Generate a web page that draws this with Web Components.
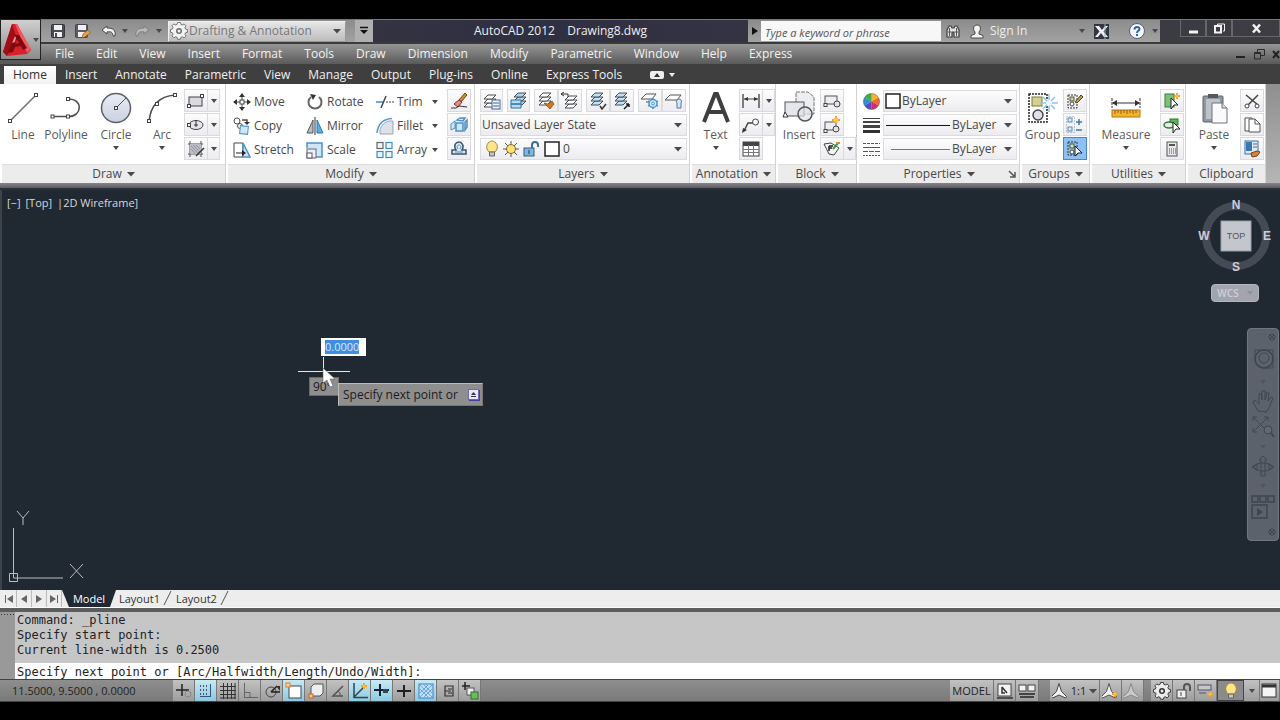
<!DOCTYPE html>
<html lang="en">
<head>
<meta charset="utf-8">
<title>AutoCAD 2012 Drawing8.dwg</title>
<style>
html,body{margin:0;height:100%}
body{background:#000;font-family:"Open Sans","Noto Sans",sans-serif;font-size:12px;line-height:16px;color:#444}
</style>
</head>
<body>
<cad-app></cad-app>
<script>
const D='stroke="#4c4c4c" fill="none"', B='stroke="#4d8fc4" fill="#cfe6f6"';
const node=(x,y)=>`<rect x="${x-1.5}" y="${y-1.5}" width="3" height="3" fill="#fff" stroke="#444"/>`;
const stack=(x,y,c='#fff')=>[8,4,0].map(d=>`<path d="M${x} ${y+d+4}l4-4h8l-4 4z" fill="${c}" stroke="#484c52"/>`).join('');
const gear=(c,s)=>`<path fill="${c}" stroke="${s}" d="M7.5 1h3l.5 2 1.6.7L14.500 2.600l2 2-1.200 1.900.7 1.500 2 .5v3l-2 .5-.7 1.500 1.200 1.900-2 2-1.900-1.200-1.600.7-.5 2h-3l-.5-2-1.600-.7-1.900 1.200-2-2 1.200-1.900L2 12l-2-.5v-3L2 8l.7-1.500L1.500 4.600l2-2 1.900 1.100L7 3z" transform="translate(.5 -.5) scale(.94)"/><circle cx="9" cy="9" r="3" fill="${s}"/><circle cx="9" cy="9" r="1.500" fill="${c}"/>`;
const person='<path d="M7 1.500l2.500 8 5 5-1 1.500-6.500-3-6.500 3-1-1.500 5-5z"';
const star=(x,y,r=3)=>`<path d="M${x} ${y-r-1}v${2*r+2}M${x-r-1} ${y}h${2*r+2}" stroke="#f7a21f" stroke-width="2"/><circle cx="${x}" cy="${y}" r="${r-.5}" fill="#ffc04d"/>`;
const ICONS={
logo:[30,34,'<path d="M10 1h5l14 26-4 4-20 2-4-4z" fill="#d8202c"/><path d="M10 1L1 29l4 4 9-20z" fill="#a10e18"/><path d="M10 1l3 0 12 29 4-4L15 1z" fill="#ee5a5f"/><path d="M13 12L6 30l5-1 2-5 6-1 2 4 4-2-8-13zM15 16l2 4-4 1z" fill="#7c0a10"/><path d="M13 13l-3 7 3-1 1-4z" fill="#f58b8b"/>'],
save:[14,14,'<rect x=".5" y=".5" width="13" height="13" rx="1" fill="#484b52" stroke="#33353a"/><rect x="3" y="1" width="8" height="5" fill="#eef0f4"/><rect x="3" y="8" width="8" height="5" fill="#eef0f4"/><rect x="4" y="9" width="2" height="4" fill="#484b52"/>'],
saveas:[16,15,'<rect x=".5" y=".5" width="12" height="13" rx="1" fill="#5a5d64" stroke="#45474d"/><rect x="3" y="1" width="8" height="5" fill="#eef0f4"/><rect x="3" y="8" width="7" height="5" fill="#eef0f4"/><path d="M7 14l1-4 5-4 2.500 2.500L10 13z" fill="#e9a24a" stroke="#7a4a17" stroke-width=".6"/>'],
undo:[15,12,'<path d="M6 1L1 5l5 4V7c4-1 6 .5 6 4h2c1-6-2-8-8-8z" fill="#f2f2f2" stroke="#4a4a4a"/>'],
redo:[15,12,'<path d="M9 1l5 4-5 4V7c-4-1-6 .5-6 4H1C0 5 3 3 9 3z" fill="#b8b8b8" stroke="#7d7d7d"/>'],
gear:[18,18,gear('#f3f3f3','#6e6e6e')],
binoc:[16,15,'<path d="M2 13V6l2-4h2l1 2h2l1-2h2l2 4v7H9V8H7v5z" fill="#e3e3e3" stroke="#3e3e3e" stroke-width="1.200"/><path d="M3 8h3M10 8h3M4.500 4v8M11.500 4v8" stroke="#555"/>'],
user:[14,15,'<path d="M1 14v-2.500L5 10V8C2 4 4 1 7 1s5 3 2 7v2l4 1.500V14z" fill="#f4f4f4" stroke="#4c4c4c"/>'],
exch:[15,15,'<rect width="15" height="15" fill="#33363f"/><path d="M1 2h4l3 4 3-4h3l-4.500 5.500L14 13h-4L7 9l-3 4H1l4.500-5.500z" fill="#eef1f6"/><path d="M11 0v15" stroke="#9aa" />'],
help:[16,16,'<circle cx="8" cy="8" r="7.500" fill="#f3f6fb" stroke="#5a6270"/><path d="M5.500 6.500C5.500 3 10.800 3.200 10.500 6.200 10.300 7.800 8 8 8 10" stroke="#3560a8" stroke-width="2" fill="none"/><rect x="7" y="11" width="2" height="2" fill="#3560a8"/>'],
min:[11,11,'<path d="M1 9h9" stroke="#f2f2f2" stroke-width="3"/>'],
max:[11,11,'<path d="M3.500 2V1h7v7H9" stroke="#f2f2f2" fill="none"/><rect x="1" y="3" width="6" height="6.500" fill="none" stroke="#f2f2f2" stroke-width="2"/>'],
close:[11,11,'<path d="M2 1.500l7 8M9 1.500l-7 8" stroke="#f2f2f2" stroke-width="2.500"/>'],
dmin:[10,10,'<path d="M0 8h9" stroke="#222" stroke-width="2"/>'],
dmax:[12,11,'<path d="M4.500 3.500v-3h7v6h-4M1.500 3.500h6v6.500h-6zM1 4.500h7" stroke="#2b2b2b" fill="none"/>'],
dclose:[8,9,'<path d="M1 1l6 7M7 1L1 8" stroke="#222" stroke-width="2"/>'],
line:[32,32,`<path d="M3 29L29 3" stroke="#6a6a6a" stroke-width="1.500"/>${node(3,29)}${node(29,3)}`],
pline:[32,32,`<path d="M18 7c15-1 15 18 0 17.500H3" ${D} stroke-width="1.500"/>${node(18,7)}${node(18,24.500)}${node(2.500,24.500)}`],
circle:[32,32,`<defs><linearGradient id="c" x2="0" y2="1"><stop stop-color="#e9edf5"/><stop offset="1" stop-color="#c9d1e0"/></linearGradient></defs><circle cx="16" cy="16" r="14.500" fill="url(#c)" stroke="#5c5f66" stroke-width="1.500"/><path d="M16 16L26 6" stroke="#555"/>${node(16,16)}`],
arc:[32,32,`<path d="M3 30Q5 5 29 3" ${D} stroke-width="1.500"/>${node(3,29)}${node(11,12)}${node(29,3)}`],
rect:[18,16,`<rect x="2" y="4" width="13" height="9" fill="#d9dbe0" stroke="#444"/>${node(2,13)}${node(15,3)}`],
ellipse:[18,16,`<ellipse cx="9" cy="8" rx="7" ry="4.500" fill="#e4e6ea" stroke="#444"/>${node(2,8)}<path d="M7 8h4M9 3v7" stroke="#333"/>`],
hatch:[18,18,`<path d="M3 1v16M14 1v16M1 4h15M1 14h15" stroke="#555"/><path d="M3 4h11v10H3z" fill="#b9bcc4"/><path d="M4 6l7 7M4 9l4 4M6 5l7 7M9 5l4 4" stroke="#999"/><path d="M9 16l8-8" stroke="#333" stroke-width="1.500"/>`],
move:[18,18,'<path d="M9 2v14M2 9h14" stroke="#444"/><path d="M9 0l3 4H6zM9 18l3-4H6zM0 9l4-3v6zM18 9l-4-3v6z" fill="#333"/><rect x="7" y="7" width="4" height="4" fill="#fff" stroke="#444"/>'],
rotate:[18,18,'<path d="M5 4a6.500 6.500 0 1 0 8 0" fill="none" stroke="#666" stroke-width="2"/><path d="M4 1l6 1-3 5z" fill="#333"/>'],
copy:[18,18,`<circle cx="4" cy="4" r="3" ${D}/><path d="M9 3h5v3" ${D} stroke-width="1.500"/><path d="M11 5h6l-3 3z" fill="#333"/><circle cx="7" cy="9" r="2.500" ${D}/><rect x="7" y="9" width="8" height="8" ${B} transform="rotate(6 11 13)"/>`],
mirror:[18,18,'<path d="M7 3v13H1z" fill="#b9bcc2" stroke="#555"/><path d="M11 3v13h6z" fill="#5aaee0" stroke="#2d78ac"/><path d="M9 0v18" stroke="#333"/>'],
stretch:[18,18,`<path d="M1 2h9v14H1z" fill="#fff" stroke="#444"/><path d="M10 2l7 14h-7z" ${B} stroke-width="1.500"/><path d="M3 12h7" stroke="#222"/><path d="M13 12l-4-3v6z" fill="#222"/>`],
scale:[18,18,`<path d="M1 7V2h15v14h-6" ${B} stroke-width="1.500"/><rect x="1" y="8" width="9" height="9" fill="#eef" stroke="#667"/><rect x="1" y="12" width="5" height="5" fill="#fff" stroke="#556"/>`],
trim:[18,18,'<path d="M0 9h7" stroke="#3b8fd0" stroke-width="1.500"/><path d="M5 15L10 3" stroke="#444" stroke-width="1.500"/><path d="M10 9h8" stroke="#444" stroke-dasharray="2 1"/>'],
fillet:[18,18,'<path d="M4 17V13C5 8 9 5 13 4h4v13z" fill="#dde2ea" stroke="#9aa3b0"/><path d="M1 16C2 7 7 2 16 1.500" fill="none" stroke="#4d9ad0" stroke-width="1.500"/>'],
array:[18,18,'<g fill="#eef6fc" stroke="#666" stroke-width="1.200"><rect x="1" y="1.500" width="6" height="6"/><rect x="10" y="1.500" width="6" height="6" stroke="#3f8bc4"/><rect x="1" y="10.500" width="6" height="6" stroke="#3f8bc4"/><rect x="10" y="10.500" width="6" height="6" stroke="#3f8bc4"/></g>'],
erase:[18,18,'<path d="M9 8l6-7 2 2-6 7z" fill="#d8892d" stroke="#6d4515"/><path d="M4 12l5-4 3 2-4 5z" fill="#e58b88" stroke="#7a3330"/><path d="M1 16h5l3-2 8 1" stroke="#333" fill="none"/>'],
explode:[18,18,`<path d="M1 8l4-3v7l-4 2z" ${B}/><rect x="6" y="7" width="7" height="8" ${B} stroke-width="1.500"/><path d="M7 4l3-2h5l-2 3zM15 6l2-2v7l-2 3z" ${B} stroke-width="1.500"/>`],
offset:[18,18,'<path d="M2 14h14v-4h-4c3-5-1-8-3-8-3 0-6 3-3 8H2z" fill="#dcebf8" stroke="#415468" stroke-width="1.500"/><path d="M5 12h8M8 9c-2-3 0-4 1-4s3 1 1 4" stroke="#4d8fc4" fill="none"/>'],
lprop:[20,20,stack(2,4)+'<rect x="10" y="9" width="8" height="9" fill="#eef5fc" stroke="#44678c"/><path d="M11 12h6M11 15h6" stroke="#44678c"/>'],
lstate:[20,20,stack(5,2,'#a9d3f2')+'<path d="M2 9h10v4H2zM2 13h10v4H2z" fill="#b9dcf5" stroke="#2f6ea3"/>'],
lcur:[20,20,stack(3,2)+'<path d="M8 12l4 1 4-3 2 3-4 5z" fill="#d8761f" stroke="#7f4410" stroke-width=".7"/>'],
lprev:[20,20,stack(5,5)+'<path d="M1 3h7v3M1 3l3-2M1 3l3 2" stroke="#333" fill="none"/>'],
liso:[20,20,stack(3,2,'#bfe0f5')+'<path d="M12 15l2 3 4-5" stroke="#333" fill="none" stroke-width="1.500"/>'],
luniso:[20,20,stack(3,2,'#bfe0f5')+'<path d="M12 18l5-5M17 13v3M17 13h-3" stroke="#222" stroke-width="1.500"/>'],
lfreeze:[20,20,'<path d="M1 8l5-5h10l-4 5zM6 11h4" fill="#fff" stroke="#555"/><path d="M13 7v11M8 10l10 5M18 10L8 15" stroke="#4a95cf" stroke-width="1.500"/><circle cx="13" cy="12.500" r="4" fill="#dcedf9" stroke="#4a95cf" stroke-width="1.500"/><circle cx="13" cy="12.500" r="1.500" fill="none" stroke="#4a95cf"/>'],
loff:[20,20,'<path d="M1 9l5-5h11l-4 5z" fill="#fff" stroke="#555"/><path d="M13 12a2.500 2.500 0 1 1 4 0v5h-4z" fill="#d8e7f5" stroke="#5876a0"/>'],
bulb:[14,18,'<path d="M4 12C-1 7 3 1 7 1s8 6 3 11z" fill="#ffe48a" stroke="#a1893d"/><path d="M4.500 12h5v4h-5z" fill="#c5c5c5" stroke="#666"/>'],
sun:[18,18,'<path d="M9 1v16M1 9h16M3 3l12 12M15 3L3 15" stroke="#555"/><circle cx="9" cy="9" r="4.500" fill="#ffe070" stroke="#806a28"/>'],
unlock:[18,18,'<rect x="1" y="8" width="10" height="8" fill="#7db7de" stroke="#2f607f"/><path d="M9 8V5c0-4 6-4 6 0v2" fill="none" stroke="#3c7090" stroke-width="2"/><path d="M6 10v4" stroke="#234"/>'],
swatch:[16,16,'<rect x="1" y="1" width="14" height="14" fill="#fff" stroke="#222" stroke-width="1.500"/>'],
bigA:[32,32,'<path d="M4 30L15 2h2l11 28M8 20h16" fill="none" stroke="#3f3f3f" stroke-width="4"/>'],
dim:[20,18,'<path d="M2 2v14M18 2v14" stroke="#555" stroke-width="1.500"/><path d="M3 7h14" stroke="#444"/><path d="M3 7l4-2v4zM17 7l-4-2v4z" fill="#333"/>'],
leader:[20,18,'<path d="M3 15l4-8h5" stroke="#444" fill="none" stroke-width="1.500"/><path d="M1 17l5-3-4-2z" fill="#333"/><circle cx="14.500" cy="6" r="3" fill="#fff" stroke="#444"/>'],
table:[20,18,'<rect x="2" y="2" width="16" height="14" fill="#fff" stroke="#444"/><path d="M2 4h16" stroke="#444" stroke-width="4"/><path d="M2 9.500h16M2 12.500h16M7.500 5v11M12.500 5v11" stroke="#777"/>'],
insert:[34,34,'<path d="M14 11V1h12l6 5v17H14z" fill="#eceef2" stroke="#777" stroke-dasharray="4 1"/><rect x="3" y="11" width="19" height="14" fill="#e3e6ec" stroke="#555"/><circle cx="23" cy="23" r="7" fill="#dfe2e8aa" stroke="#555" stroke-width="1.500"/><path d="M3 21l3 5H1z" fill="#fff" stroke="#333"/>'],
bcreate:[18,18,`<rect x="2" y="4" width="12" height="8" fill="#eceef2" stroke="#555"/><circle cx="14" cy="12" r="3" fill="#e0e2e6" stroke="#444"/>${node(2.500,13)}`],
bedit:[18,18,`<rect x="2" y="6" width="11" height="8" fill="#eceef2" stroke="#555"/><circle cx="13" cy="13" r="3" fill="#e0e2e6" stroke="#444"/>${node(2.500,15)}${star(13,4)}`],
battr:[18,18,'<path d="M1 4l7-1 8 5-5 7-5-1z" fill="#f3f3f3" stroke="#444"/><path d="M6 6v5M6 6h4M6 8h3" stroke="#222" stroke-width="1.500"/><path d="M10 9l5-6" stroke="#3f9b46" stroke-width="2"/><path d="M13 3h4" stroke="#e0892a" stroke-width="2"/>'],
wheel:[17,17,'<g transform="translate(8.500 8.500)"><circle r="8" fill="#ddd"/><path d="M0 0V-8A8 8 0 0 1 7-4z" fill="#f4b52c"/><path d="M0 0L7-4A8 8 0 0 1 7 4z" fill="#ee6b2d"/><path d="M0 0L7 4A8 8 0 0 1 0 8z" fill="#d32f6d"/><path d="M0 0V8A8 8 0 0 1-7 4z" fill="#5b4bc0"/><path d="M0 0L-7 4A8 8 0 0 1-7-4z" fill="#2f8fd6"/><path d="M0 0L-7-4A8 8 0 0 1 0-8z" fill="#3fae4a"/><circle r="8" fill="none" stroke="#66666688"/></g>'],
weights:[17,17,'<path d="M0 1.500h17" stroke="#444"/><path d="M0 5h17" stroke="#444" stroke-width="2"/><path d="M0 9.500h17" stroke="#444" stroke-width="3"/><path d="M0 14.500h17" stroke="#333" stroke-width="3"/>'],
types:[17,17,'<g stroke="#555"><path d="M0 2.500h17" stroke-dasharray="3 1"/><path d="M0 6.500h17"/><path d="M0 10.500h17" stroke-dasharray="5 1"/><path d="M0 14.500h17" stroke-dasharray="2 1"/></g>'],
wline:[66,3,'<path d="M1 1.500h64" stroke="#111"/>'],
tline:[66,3,'<path d="M6 1.500h59" stroke="#777"/>'],
group:[32,32,`<rect x="2" y="2" width="18" height="28" fill="#fff" stroke="#222" stroke-width="1.500" stroke-dasharray="2 1"/><rect x="5" y="5" width="10" height="9" fill="#d2d28a" stroke="#777a3c"/><circle cx="11" cy="23" r="5" fill="#dfe3e8" stroke="#445"  stroke-width="1.500"/><path d="M22 2v18M13 11h18M16 5l12 12M28 5L16 17" stroke="#8cc6ec" stroke-width="1.500"/><circle cx="22" cy="11" r="3" fill="#eef9ff"/>`],
gedit:[18,18,'<rect x="2" y="3" width="9" height="13" fill="none" stroke="#333" stroke-dasharray="2 1"/><rect x="4" y="5" width="4" height="4" fill="#d2d28a" stroke="#555"/><circle cx="6" cy="12" r="2" fill="#fff" stroke="#444"/><path d="M9 10l6-7 2 2-6 6z" fill="#b8a04a" stroke="#4d431b"/>'],
gadd:[18,18,'<g fill="#dcecf8" stroke="#5c87ab"><rect x="2" y="2" width="4" height="4"/><rect x="2" y="11" width="4" height="4"/></g><rect x="0.500" y=".5" width="8" height="16" fill="none" stroke="#7a94ad" stroke-dasharray="1 2"/><path d="M10 6h6M13 3v6M10 14h6" stroke="#44789f" stroke-width="1.500"/>'],
gsel:[18,18,'<rect x="2" y="2" width="9" height="13" fill="none" stroke="#333" stroke-dasharray="2 1"/><rect x="4" y="4" width="4" height="4" fill="#d8eaa0" stroke="#555"/><circle cx="6" cy="12" r="2" fill="#fff" stroke="#444"/><path d="M9 6l7 7h-4l-3 3z" fill="#f8f8f8" stroke="#222"/>'],
measure:[32,32,'<path d="M2 6v10M30 6v10" stroke="#333" stroke-dasharray="3 1"/><path d="M3 11h26" stroke="#333"/><path d="M2 11l5-3v6zM30 11l-5-3v6z" fill="#333"/><rect x="2" y="18" width="28" height="7" fill="#f5b32c" stroke="#b0761a"/><path d="M5 18v4M8 18v3M11 18v4M14 18v3M17 18v4M20 18v3M23 18v4M26 18v3" stroke="#8a5c12"/>'],
qsel:[20,20,`<rect x="3" y="3" width="9" height="13" fill="#7cc07a" stroke="#3c7a3c"/><path d="M9 7l7 7h-4l-3 4z" fill="#fff" stroke="#222"/>${star(15,5,2)}`],
selall:[20,20,'<rect x="8" y="4" width="8" height="6" fill="#5fb35f" stroke="#2f7a2f"/><ellipse cx="7" cy="10" rx="5" ry="3" fill="#dff0df" stroke="#3c7a3c" stroke-width="1.500"/><path d="M11 7l7 7h-4l-3 4z" fill="#fff" stroke="#222"/>'],
calc:[18,18,'<rect x="4" y="2" width="10" height="14" fill="#e8e8e8" stroke="#555"/><rect x="6" y="4" width="6" height="2" fill="#555"/><path d="M6 9h7M6 11h7M6 13h7" stroke="#555" stroke-dasharray="1 1" />'],
paste:[32,32,'<rect x="5" y="4" width="20" height="26" rx="1" fill="#9298a0" stroke="#5d636b"/><path d="M10 2h10v4H10z" fill="#555a60"/><rect x="8" y="7" width="14" height="20" fill="#bec3ca"/><path d="M14 11h10l5 5v15H14z" fill="#fafafa" stroke="#6b7179"/><path d="M24 11v5h5" fill="#ddd" stroke="#6b7179"/>'],
cut:[18,18,'<path d="M3 3l12 10M15 3L5 13" stroke="#444" stroke-width="1.500"/><circle cx="4" cy="14" r="2" fill="#fff" stroke="#444"/><circle cx="14" cy="14" r="2" fill="#fff" stroke="#444"/>'],
clip:[18,18,'<path d="M2 2h7v13H2z" fill="#fff" stroke="#555"/><path d="M6 3h6l5 5v8H6z" fill="#fff" stroke="#555"/><path d="M12 3v5h5" fill="none" stroke="#555"/>'],
match:[18,18,'<rect x="2" y="1" width="13" height="13" fill="#dfeaf5" stroke="#3a6ea5"/><rect x="3" y="2" width="6" height="9" fill="#3877b8"/><path d="M10 4h4M10 7h4" stroke="#667"/><path d="M8 13l6-2 3 1-3 4-5 1z" fill="#d98138" stroke="#7a4415"/>'],
launch:[8,8,'<path d="M1 1l5 5M7 2v5H2" stroke="#555" stroke-width="1.500" fill="none"/>'],
wheelnav:[22,24,'<path d="M3 3h18v18H12A9 9 0 0 1 3 12z" fill="none" stroke="#3e4650"/><circle cx="12" cy="12" r="9" fill="none" stroke="#3e4650" stroke-width="1.500"/><circle cx="12" cy="11" r="5" fill="none" stroke="#3e4650"/>'],
hand:[22,24,'<path d="M6 22L1 13l2-2 4 4V5l2-1 1 7V2h3v9l2-8 2 1-1 8 3-4 2 1-4 10-3 4z" fill="none" stroke="#3e4650"/>'],
zoomx:[24,24,'<path d="M2 2l15 15M17 2L2 17M2 6V2h4M13 2h4v4M2 13v4h4" stroke="#3e4650" fill="none"/><circle cx="17" cy="15" r="4" fill="#626872" stroke="#3e4650"/><path d="M20 18l3 4" stroke="#3e4650" stroke-width="2"/>'],
orbit:[24,24,'<ellipse cx="12" cy="13" rx="9" ry="4" fill="none" stroke="#3e4650"/><path d="M10 22V6H8l4-4 4 4h-2v16zM1 13l5-3v6zM23 13l-5-3v6z" fill="none" stroke="#3e4650"/>'],
motion:[24,26,'<path d="M1 2h6v6H1zM9 2h6v6H9zM17 2h6v6h-6zM1 11h15v13H1z" fill="none" stroke="#3e4650" stroke-width="1.500"/><path d="M6 14l6 4-6 4z" fill="#3e4650"/>'],
nclose:[8,8,'<circle cx="4" cy="4" r="3" fill="none" stroke="#3e4650"/><path d="M2 2l4 4M6 2L2 6" stroke="#3e4650"/>'],
nfirst:[12,10,'<path d="M2.500 1v8" stroke="#666"/><path d="M10 1v8L4 5z" fill="#666"/>'],
nprev:[12,10,'<path d="M9 1v8L3 5z" fill="#666"/>'],
nnext:[12,10,'<path d="M3 1v8l6-4z" fill="#666"/>'],
nlast:[12,10,'<path d="M9.500 1v8" stroke="#666"/><path d="M2 1v8l6-4z" fill="#666"/>'],
slash:[10,16,'<path d="M1 15L8 1" stroke="#555"/>'],
s1:[18,18,'<path d="M1 8h13M7 2v12" stroke="#222" stroke-width="1.500"/><circle cx="13" cy="12" r="3" fill="none" stroke="#888"/>'],
s2:[18,18,'<g stroke="#456" stroke-dasharray="1 2" stroke-width="2"><path d="M3 4h9M3 8h9M3 12h9"/></g><path d="M13.500 2v13M3 14.500h11" stroke="#357"/>'],
s3:[18,18,'<path d="M1 4.500h16M1 8.500h16M1 12.500h16M1 16h16M4.500 1v16M8.500 1v16M12.500 1v16M16 1v16" stroke="#333"/>'],
s4:[18,18,'<path d="M3.500 1v14.500H17M3 10.500h6v5" stroke="#666" fill="none"/>'],
s5:[18,18,'<circle cx="8" cy="10" r="5" fill="none" stroke="#444"/><path d="M8 10h9M8 10l6-6" stroke="#222" stroke-width="1.500"/><path d="M13 4h4v5z" fill="#333"/>'],
s6:[18,18,'<rect x="4" y="4" width="12" height="12" fill="#fff" stroke="#445"/><rect x="1" y="1" width="4" height="4" fill="#ffd29a" stroke="#d7822a"/>'],
s7:[18,18,'<path d="M4 5l3-3h9v9l-3 3H4z" fill="#eee" stroke="#555"/><rect x="2" y="12" width="4" height="4" fill="#f9c089" stroke="#c66d1e"/>'],
s8:[18,18,'<path d="M14 4L4 14h10" stroke="#555" fill="none" stroke-width="1.500"/><path d="M9 9q3 2 2 5" stroke="#555" fill="none"/>'],
s9:[18,18,`<path d="M3 1v14.500h14M3 15L13 5" stroke="#2c4656" fill="none" stroke-width="1.500"/>${star(13,4,2)}`],
s10:[18,18,'<path d="M1 8h15M7 2v12" stroke="#123" stroke-width="2"/><path d="M10 7h5v4h-5z" fill="#345"/>'],
s11:[18,18,'<path d="M2 9h14" stroke="#222" stroke-width="2"/><path d="M9 3v12" stroke="#222" stroke-width="2"/>'],
s12:[18,18,'<rect x="2" y="2" width="14" height="14" fill="#bfe0fa" stroke="#3b7fc0"/><path d="M3 3l12 12M3 7l8 8M7 3l8 8M15 3L3 15M11 3l-8 8M15 7l-8 8" stroke="#6aa6da"/>'],
s13:[18,18,'<path d="M6 4h8v10H6zM6 9h6M9 7h4M9 11h4" fill="none" stroke="#333" stroke-width="1.200"/>'],
s14:[20,20,'<path d="M2 5h8M5 1v8" stroke="#222" stroke-width="1.500"/><rect x="7" y="7" width="7" height="7" fill="#eee" stroke="#555"/><rect x="11" y="11" width="7" height="7" fill="#6dbb5c" stroke="#2f6e2a"/>'],
m1:[18,18,'<rect x="2" y="2" width="13" height="12" fill="#f3f3f3" stroke="#444"/><path d="M6 5l5 6M6 5v6h3" stroke="#333" fill="none" stroke-width="1.500"/><path d="M1 16h16" stroke="#333" stroke-width="1.500"/>'],
m2:[18,18,'<rect x="1" y="3" width="7" height="6" fill="#f3f3f3" stroke="#444"/><rect x="10" y="3" width="7" height="6" fill="#f3f3f3" stroke="#444"/><path d="M1 12h16M2 15h14" stroke="#444" stroke-width="2"/>'],
a1:[16,18,person+' fill="#f1f1f1" stroke="#444"/>'],
a2:[18,18,person+' fill="#f1f1f1" stroke="#555"/>'+star(13,12,2)],
a3:[18,18,person+' fill="#c9c9c9" stroke="#888"/>'],
gear2:[18,18,gear('#ececec','#333')],
lock:[18,18,'<rect x="2" y="8" width="9" height="8" fill="#efefef" stroke="#444"/><path d="M9 8V5c0-4 6-4 6 0v4" fill="none" stroke="#555" stroke-width="2"/><path d="M6 10v4" stroke="#444"/>'],
hw:[18,18,'<rect x="1" y="3" width="13" height="5" fill="#c5c7cf" stroke="#556"/><path d="M2 11h7" stroke="#556"/>'+star(13,12,2)],
clean:[18,18,'<rect x="1" y="2" width="14" height="13" fill="#f5f5f5" stroke="#333"/><path d="M1 4h14" stroke="#333" stroke-width="3"/>'],
down:[8,6,'<path d="M0 1h8L4 5.500z" fill="#4a4a4a"/>'],
tiny:[6,4,'<path d="M0 0h6L3 4z" fill="#4a4a4a"/>'],
tinylight:[6,4,'<path d="M0 0h6L3 4z" fill="#eee"/>'],
right:[6,8,'<path d="M0 0v8l6-4z" fill="#111"/>'],
more:[10,10,'<path d="M1 1.500h8" stroke="#111" stroke-width="1.500"/><path d="M1 4h8L5 8z" fill="#111"/>'],
pill:[14,8,'<rect width="14" height="8" rx="2" fill="#eee"/><path d="M4 6h6L7 2z" fill="#333"/>'],
cursor:[14,20,'<path d="M1 0v15l4-3 3 7 3-1-3-7h5z" fill="#fff" stroke="#555" stroke-width=".5"/>'],
pick:[12,12,'<rect x=".5" y=".5" width="10" height="10" fill="#e9eaf6" stroke="#6a6ab0"/><path d="M3 6h5L5.500 3z" fill="#334"/><path d="M3 7.500h5" stroke="#334"/><path d="M1 11.500h11M11.500 1v11" stroke="#4242a0" fill="none"/>']
};
const define=(name,css,html)=>{
  const t=document.createElement('template');
  customElements.define(name,class extends HTMLElement{
    connectedCallback(){
      if(this.shadowRoot)return;
      const r=this.attachShadow({mode:'open'});
      t.innerHTML=`<style>:host{box-sizing:border-box}*{box-sizing:border-box}button,select,input{font:inherit;color:inherit;margin:0;padding:0;border:0;background:none;border-radius:0}button{display:flex;align-items:center;justify-content:center;white-space:nowrap}a{color:inherit;text-decoration:none}${css}</style>`+(typeof html==='function'?html(this):html);
      r.append(t.content.cloneNode(true));
    }
  });
};
define('cad-icon',':host{display:block;flex:none}svg{display:block}',e=>{
  const [w,h,s]=ICONS[e.getAttribute('name')];
  return `<svg width="${w}" height="${h}" viewBox="0 0 ${w} ${h}" aria-hidden="true">${s}</svg>`;});
const ic=n=>`<cad-icon name="${n}"></cad-icon>`;

define('icon-button',':host{display:flex;flex:none}button{width:100%;height:100%}',
  e=>`<button aria-label="${e.getAttribute('label')}">${ic(e.getAttribute('icon'))}</button>`);

define('big-tool',`:host{display:block}button{flex-direction:column;justify-content:flex-start;width:100%;height:100%;padding-top:2px}
.i{height:34px;display:flex;align-items:center}.l{margin-top:2px;color:#5a5a5a}cad-icon[name=tiny]{margin-top:3px}`,
  e=>`<button><span class="i">${ic(e.getAttribute('icon'))}</span><span class="l">${e.getAttribute('label')}</span>${e.hasAttribute('menu')?ic('tiny'):''}</button>`);

define('row-tool',`:host{display:flex;height:24px;align-items:center;justify-content:space-between}button{gap:3px;height:22px}.m{width:12px}`,
  e=>`<button>${ic(e.getAttribute('icon'))}${e.getAttribute('label')}</button>${e.hasAttribute('menu')?`<button class="m" aria-label="${e.getAttribute('label')} options">${ic('tiny')}</button>`:''}`);

define('chip-tool',`:host{display:flex;height:23px}button{width:24px;height:23px;background:linear-gradient(#fcfcfc,#ececf1);border:1px solid #d9d9de}
.m{width:12px;border-left:0}:host([on]) button{background:#8fc0f2;border-color:#4d86c4}:host([narrow]) button{width:23px}`,
  e=>`<button aria-label="${e.getAttribute('label')}">${ic(e.getAttribute('icon'))}</button>${e.hasAttribute('menu')?`<button class="m" aria-label="${e.getAttribute('label')} options">${ic('tiny')}</button>`:''}`);

define('drop-list',`:host{display:flex;align-items:center;gap:3px;height:22px;padding:0 4px;background:linear-gradient(#fdfdfd,#ececf0);border:1px solid #dcdce0;min-width:0}
:host([tight]){gap:1px;padding:0 4px 0 1px}
select{appearance:none;flex:1;min-width:0;height:100%;text-align:left;outline:0}:host([plain]){background:linear-gradient(#e6e6e6,#bdbdbd);border-color:#f0f0f0 #999 #999 #f0f0f0;color:#777}`,
  e=>`<slot></slot><select aria-label="${e.getAttribute('label')}"><option>${e.getAttribute('value')}</option></select>${ic('down')}`);

define('ribbon-panel',`:host{display:flex;flex-direction:column;flex:none;background:#fff;border-right:1px solid #d2d2d2}
.body{display:flex;height:80px;padding-top:5px}footer{height:19px;background:#ececec;border-top:1px solid #dedede;display:grid;grid-template-columns:1fr auto 1fr;align-items:center}
button{grid-column:2;gap:5px;height:18px}.x{grid-column:3;justify-self:end;width:14px}`,
  e=>`<div class="body"><slot></slot></div><footer><button>${e.getAttribute('label')}${e.hasAttribute('flat')?'':ic('down')}</button>${e.hasAttribute('launch')?`<button class="x" aria-label="Open palette">${ic('launch')}</button>`:''}</footer>`);

define('title-bar',`:host{display:flex;height:25px;background:linear-gradient(90deg,#3a3a40,#2f2f42 40%,#3d3d42);border-top:1px solid #777;border-bottom:2px solid #3b3b3b;color:#eee}
.q,.r{display:flex;flex:none;align-items:center;background:linear-gradient(#8c8c8c,#a2a2a2)}
.q{width:332px;padding-left:9px}.q icon-button{width:18px;height:22px}.q .n{width:16px}.q .wide{width:34px}.q drop-list{width:178px;height:21px;margin-right:9px}.q .e{background:#b0b0b0}
h1{flex:1;margin:0;font-size:12px;line-height:22px;font-weight:400;text-align:center;white-space:pre}
.r .a{width:13px;height:22px}.r input{width:180px;height:20px;background:#f7f7f7;padding:2px 4px 0;font-size:11px;font-style:italic}.r input::placeholder{color:#555;opacity:1}
.r .b{width:24px;height:22px}.r a{width:85px;margin-left:1px}.r .d{width:14px}.r .h{width:24px;margin-left:12px}.r .k{width:11px}.w{display:flex;flex:none;width:120px;padding-left:20px}.w icon-button{width:26px;height:17px;border:1px solid #66666c;border-top:0}.w .c{width:48px}`,
`<div class="q"><icon-button class="n" icon="save" label="Save"></icon-button><icon-button class="wide" icon="saveas" label="Save As"></icon-button><icon-button class="n" icon="undo" label="Undo"></icon-button><icon-button icon="tiny" label="Undo list"></icon-button><icon-button class="n" icon="redo" label="Redo"></icon-button><icon-button icon="tiny" label="Redo list"></icon-button>
<drop-list plain tight label="Workspace" value="Drafting &amp;amp; Annotation">${ic('gear')}</drop-list><icon-button class="e" icon="more" label="Customize"></icon-button></div>
<h1>AutoCAD 2012    Drawing8.dwg</h1>
<div class="r"><icon-button class="a" icon="right" label="Toggle search"></icon-button><input aria-label="Search" placeholder="Type a keyword or phrase"><icon-button class="b" icon="binoc" label="Find"></icon-button><icon-button class="b" icon="user" label="Account"></icon-button><a href="#">Sign In</a><icon-button class="d" icon="tiny" label="Account menu"></icon-button><icon-button class="b" icon="exch" label="Exchange"></icon-button><icon-button class="h" icon="help" label="Help"></icon-button><icon-button class="k" icon="tiny" label="Help menu"></icon-button></div>
<div class="w"><icon-button icon="min" label="Minimize"></icon-button><icon-button icon="max" label="Restore"></icon-button><icon-button class="c" icon="close" label="Close"></icon-button></div>`);

define('menu-bar',`:host{display:flex;height:20px;align-items:center;background:linear-gradient(#969696,#5a5a5a);color:#f2f2f2}nav{display:flex;gap:22px;flex:1;padding-left:14px}div{display:flex;gap:7px}`,
`<nav>${'File,Edit,View,Insert,Format,Tools,Draw,Dimension,Modify,Parametric,Window,Help,Express'.split(',').map(t=>`<a href="#">${t}</a>`).join('')}</nav><div>${['dmin,Minimize drawing','dmax,Restore drawing','dclose,Close drawing'].map(s=>{const[a,b]=s.split(',');return`<icon-button icon="${a}" label="${b}"></icon-button>`}).join('')}</div>`);

define('app-header',`:host{display:grid;grid-template-columns:41px 1fr;grid-template-rows:25px 20px;background:#5a5a5a}
.app{grid-row:1/3;height:41px;background:linear-gradient(#d0d0d0,#8b8b8b);border:1px solid #222;gap:1px}title-bar,menu-bar{grid-column:2}`,
`<button class="app" aria-label="Application menu">${ic('logo')}${ic('tiny')}</button><title-bar></title-bar><menu-bar></menu-bar>`);

define('ribbon-tabs',`:host{display:flex;height:20px;padding:2px 0 0 4px;background:#3f3f3f;color:#f0f0f0}nav{display:flex;gap:18px;align-items:center}
a{line-height:18px}a.on{background:linear-gradient(#fff,#f0f0f0);color:#333;padding:0 9px;margin-right:-9px}button{gap:5px;margin-left:10px;height:18px}`,
`<nav><a class="on" href="#">Home</a>${'Insert,Annotate,Parametric,View,Manage,Output,Plug-ins,Online,Express Tools'.split(',').map(t=>`<a href="#">${t}</a>`).join('')}<button aria-label="Minimize ribbon">${ic('pill')}${ic('tinylight')}</button></nav>`);

const tools=(tag,s)=>s.split(';').map(x=>{const[i,l,f='']=x.split(',');return`<${tag} icon="${i}" label="${l}" ${f}></${tag}>`}).join('');
define('ribbon-bar',`:host{display:flex;gap:2px;height:106px;padding:0 0 7px 2px;background:linear-gradient(#fff,#fff) 0 0/1266px 99px no-repeat,linear-gradient(#8f8f8f,#b5b5b5) 0 0/100% 99px no-repeat,linear-gradient(transparent 99px,#85858a 99px,#5c5c62 104px,#2a3037 104px);color:#484848}
.c{display:flex;flex-direction:column;gap:1px}.rows{gap:0;padding-top:1px}.g{display:grid;row-gap:2px;padding:0 2px 0 3px;width:100%;align-content:start}
.lr{display:flex;gap:4px}.p{display:flex}.pr{display:grid;grid-template-columns:17px 1fr;grid-auto-rows:24px;gap:0 3px;padding:0 2px 0 4px;width:100%;align-items:center;align-content:start}`,
`<ribbon-panel label="Draw" style="width:224px"><big-tool icon="line" label="Line" style="width:42px"></big-tool><big-tool icon="pline" label="Polyline" style="width:44px"></big-tool><big-tool icon="circle" label="Circle" menu style="width:56px"></big-tool><big-tool icon="arc" label="Arc" menu style="width:36px;margin-right:4px"></big-tool><div class="c">${tools('chip-tool','rect,Rectangle,menu;ellipse,Ellipse,menu;hatch,Hatch,menu')}</div></ribbon-panel>
<ribbon-panel label="Modify" style="width:247px"><div class="c rows" style="width:73px;margin-left:5px">${tools('row-tool','move,Move;copy,Copy;stretch,Stretch')}</div><div class="c rows" style="width:70px">${tools('row-tool','rotate,Rotate;mirror,Mirror;scale,Scale')}</div><div class="c rows" style="width:65px;margin-right:6px">${tools('row-tool','trim,Trim,menu;fillet,Fillet,menu;array,Array,menu')}</div><div class="c">${tools('chip-tool','erase,Erase;explode,Explode;offset,Offset')}</div></ribbon-panel>
<ribbon-panel label="Layers" style="width:213px"><div class="g"><div class="lr">${tools('chip-tool','lprop,Layer properties,narrow;lstate,Layer states,narrow')}<div class="p">${tools('chip-tool','lcur,Make current;lprev,Previous layer')}</div><div class="p">${tools('chip-tool','liso,Isolate;luniso,Unisolate')}</div><div class="p">${tools('chip-tool','lfreeze,Freeze;loff,Layer off')}</div></div><drop-list tight label="Layer state" value="Unsaved Layer State"></drop-list><drop-list label="Layer" value="0">${ic('bulb')+ic('sun')+ic('unlock')+ic('swatch')}</drop-list></div></ribbon-panel>
<ribbon-panel label="Annotation" style="width:84px"><big-tool icon="bigA" label="Text" menu style="width:47px"></big-tool><div class="c">${tools('chip-tool','dim,Dimension,menu;leader,Leader,menu;table,Table')}</div></ribbon-panel>
<ribbon-panel label="Block" style="width:79px"><big-tool icon="insert" label="Insert" style="width:42px"></big-tool><div class="c">${tools('chip-tool','bcreate,Create;bedit,Edit;battr,Attributes,menu')}</div></ribbon-panel>
<ribbon-panel label="Properties" launch style="width:161px"><div class="pr">${ic('wheel')}<drop-list tight label="Color" value="ByLayer">${ic('swatch')}</drop-list>${ic('weights')}<drop-list tight label="Lineweight" value="ByLayer">${ic('wline')}</drop-list>${ic('types')}<drop-list tight label="Linetype" value="ByLayer">${ic('tline')}</drop-list></div></ribbon-panel>
<ribbon-panel label="Groups" style="width:68px"><big-tool icon="group" label="Group" style="width:41px"></big-tool><div class="c">${tools('chip-tool','gedit,Group edit;gadd,Add to group;gsel,Group selection,on')}</div></ribbon-panel>
<ribbon-panel label="Utilities" style="width:94px"><big-tool icon="measure" label="Measure" menu style="width:68px"></big-tool><div class="c">${tools('chip-tool','qsel,Quick select;selall,Select all;calc,Calculator')}</div></ribbon-panel>
<ribbon-panel label="Clipboard" flat style="width:78px"><big-tool icon="paste" label="Paste" menu style="width:52px"></big-tool><div class="c">${tools('chip-tool','cut,Cut;clip,Copy clip;match,Match')}</div></ribbon-panel>`);

define('view-cube',`:host{display:flex;flex-direction:column;align-items:center;gap:9px;width:74px}svg{display:block;font:bold 12px "Liberation Sans",sans-serif;fill:#ccd}
button{width:48px;height:18px;border:1px solid #b4b5be;border-radius:4px;background:#a2a4ae;color:#cfd0d8;font-size:10px;gap:8px;font-weight:600}`,
`<svg width="74" height="78" viewBox="0 0 74 78"><circle cx="38" cy="39" r="30" fill="none" stroke="#454b55" stroke-width="8"/><rect x="23" y="24" width="30" height="30" fill="#c3c6cd" stroke="#9a9da6"/><g text-anchor="middle"><text x="38" y="12">N</text><text x="38" y="74">S</text><text x="6" y="43">W</text><text x="69" y="43">E</text><text x="38" y="42" font-size="9" font-weight="400" fill="#555">TOP</text></g></svg><button>WCS<cad-icon name="tiny" style="opacity:.2"></cad-icon></button>`);

define('nav-bar',`:host{display:flex;flex-direction:column;align-items:center;width:32px;height:213px;padding:2px;border-radius:4px;background:#5c626c;border:1px solid #70767f}
icon-button{width:100%;height:26px}.s{height:13px;opacity:.5}.x{width:8px;height:12px;align-self:flex-end}`,
`<icon-button class="x" icon="nclose" label="Close bar"></icon-button><icon-button icon="wheelnav" label="Steering wheel" style="height:32px"></icon-button><icon-button class="s" icon="tiny" label="Wheel options"></icon-button><icon-button icon="hand" label="Pan"></icon-button><icon-button icon="zoomx" label="Zoom extents"></icon-button><icon-button class="s" icon="tiny" label="Zoom options"></icon-button><icon-button icon="orbit" label="Orbit"></icon-button><icon-button class="s" icon="tiny" label="Orbit options"></icon-button><icon-button icon="motion" label="Show motion" style="height:30px"></icon-button><icon-button class="x" icon="nclose" label="Bar options" style="margin-top:auto"></icon-button>`);

define('drawing-area',`:host{display:block;position:relative;flex:1;min-height:380px;background:#202831;border-left:2px solid #3c434b;color:#d5d8dc;overflow:hidden}
.v{display:flex;gap:5px;padding:5px;font-size:11px}.v button{height:16px}.cube{position:absolute;right:8px;top:7px}.nav{position:absolute;right:1px;top:138px}
.dyn{position:absolute;left:319px;top:148px;padding:2px 4px;background:#fff;width:45px;height:18px;display:flex}.dyn input{width:34px;height:14px;font-size:11px;line-height:14px;background:#3f8ee0;color:#d6eaff}
.cross{position:absolute;left:296px;top:167px}.ang,.pr{position:absolute;background:#8e8e8e;border:1px solid #6a6a6a;color:#1c1c1c}.ang{left:307px;top:187px;width:30px;height:19px;padding:0 3px;line-height:17px}
.cur{position:absolute;left:320px;top:178px}.pr{left:336px;top:193px;width:145px;height:23px;display:flex;align-items:center;justify-content:space-between;padding:0 2px 0 4px;border-color:#bcbcbc #777 #777 #bcbcbc}
.ucs{position:absolute;left:6px;bottom:4px}`,
`<div class="v"><button>[−]</button><button>[Top]</button><button>|2D Wireframe]</button></div><view-cube class="cube"></view-cube><nav-bar class="nav"></nav-bar>
<svg class="cross" width="54" height="18" viewBox="0 0 54 18"><path d="M0 14.500h52M25.500 0v14" stroke="#e6e6e6"/></svg><div class="dyn"><input aria-label="Distance" value="0.0000"></div><div class="ang">90°</div><cad-icon class="cur" name="cursor"></cad-icon><div class="pr"><span>Specify next point or</span>${ic('pick')}</div>
<svg class="ucs" width="80" height="84" viewBox="0 0 80 84" role="img" aria-label="Coordinate axes"><path d="M5.500 26v50H55M1.500 71.500h8v8h-8z" stroke="#b9bdc2" fill="none"/><path d="M9 9l6 7 6-7M15 16v7M62 62l13 14M75 62L62 76" stroke="#b9bdc2" fill="none"/></svg>`);

define('layout-tabs',`:host{display:flex;height:18px;align-items:stretch;background:#ededed;padding-left:2px;color:#333;border-bottom:1px solid #fafafa;font-size:11px}
icon-button{width:15px;border-right:1px solid #bbb}a{line-height:17px;padding:0 3px}.on{width:54px;padding:0;text-align:center;background:#202831;color:#fff;clip-path:polygon(0 0,100% 0,calc(100% - 6px) 100%,7px 100%)}`,
`<icon-button icon="nfirst" label="First"></icon-button><icon-button icon="nprev" label="Previous"></icon-button><icon-button icon="nnext" label="Next"></icon-button><icon-button icon="nlast" label="Last"></icon-button><a class="on" href="#">Model</a><a href="#">Layout1</a>${ic('slash')}<a href="#">Layout2</a>${ic('slash')}`);

define('command-line',`:host{display:block;border-top:4px solid #5d5d5d;background:radial-gradient(#333 1px,transparent 1px) 0 1px/3px 3px repeat-x,#999;padding-left:15px;color:#222;font:12px/15px "DejaVu Sans Mono","Liberation Mono",monospace}
pre{margin:0;font:inherit;background:#c6c6c6;padding:1px 2px 5px;height:51px}input{display:block;width:100%;height:16px;padding:1px 2px 0;background:#fff}`,
`<pre>Command: _pline
Specify start point:
Current line-width is 0.2500</pre><input aria-label="Command" value="Specify next point or [Arc/Halfwidth/Length/Undo/Width]:">`);

define('status-bar',`:host{display:flex;height:23px;border-top:1px solid #444;border-bottom:1px solid #444;background:linear-gradient(#8e8e8e,#7a7a7a);color:#222;font-size:11px}
.xy{width:173px;padding-left:12px;line-height:21px}.s{flex:1}icon-button,button{width:22px;background:linear-gradient(#c2c2c2,#9d9d9d);border-right:1px solid #777}
icon-button[on]{background:linear-gradient(#c7eaf5,#8cc9df)}.gap{width:11px}button{width:44px;height:auto;gap:3px}`,
`<div class="xy">11.5000, 9.5000 , 0.0000</div>${[,'Infer','Snap','Grid','Ortho','Polar','Osnap','3D Osnap','Tracking','DUCS','Dynamic input','Lineweight','Transparency','Quick properties','Cycling'].map((l,i)=>l?`<icon-button icon="s${i}" label="${l}" ${[2,6,9,10,12].includes(i)?'on':''}></icon-button>`:'').join('')}<span class="s"></span>
<button>MODEL</button><icon-button icon="m1" label="Quick view layouts"></icon-button><icon-button icon="m2" label="Quick view drawings" style="width:23px"></icon-button><span class="gap"></span><button style="width:50px">${ic('a1')}1:1${ic('down')}</button><icon-button icon="a2" label="Annotation visibility"></icon-button><icon-button icon="a3" label="Auto scale"></icon-button><span class="gap" style="width:7px"></span><icon-button icon="gear2" label="Workspace"></icon-button><icon-button icon="lock" label="Lock"></icon-button><icon-button icon="hw" label="Hardware"></icon-button><icon-button icon="bulb" label="Isolate" style="width:27px;background:#8b8b8b;border:1px solid #444"></icon-button><icon-button icon="tiny" label="Status menu" style="width:16px"></icon-button><icon-button icon="clean" label="Clean screen" style="width:20px"></icon-button>`);

define('cad-app',':host{display:flex;flex-direction:column;min-height:100vh;padding:19px 0 18px;background:#000}',
'<app-header></app-header><ribbon-tabs></ribbon-tabs><ribbon-bar></ribbon-bar><drawing-area></drawing-area><layout-tabs></layout-tabs><command-line></command-line><status-bar></status-bar>');
</script>
</body>
</html>
